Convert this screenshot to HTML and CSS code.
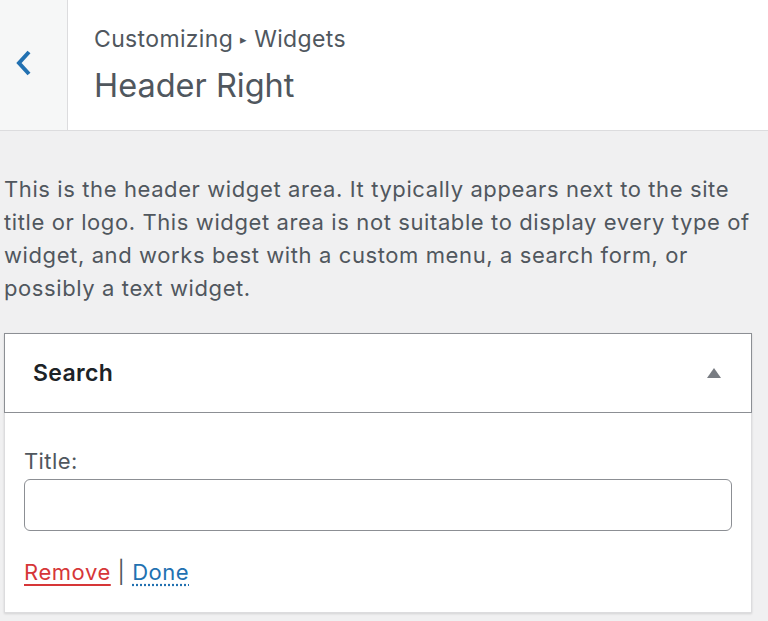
FILE: index.html
```html
<!DOCTYPE html>
<html lang="en">
<head>
<meta charset="utf-8">
<title>Header Right</title>
<link rel="stylesheet" href="styles.css">
</head>
<body>
<div class="panel">
  <header class="section-header">
    <button class="back" aria-label="Back">
      <svg width="16" height="26" viewBox="0 0 16 26"><path d="M13 2 L3 13 L13 24" fill="none" stroke="#2271b1" stroke-width="4" stroke-linecap="butt" stroke-linejoin="miter"/></svg>
    </button>
    <div class="titles">
      <div class="crumb">Customizing <span class="sep">▸</span> Widgets</div>
      <h3 class="title">Header Right</h3>
    </div>
  </header>
  <div class="content">
    <p class="description">This is the header widget area. It typically appears next to the site title or logo. This widget area is not suitable to display every type of widget, and works best with a custom menu, a search form, or possibly a text widget.</p>
    <div class="widget">
      <div class="widget-top">
        <span class="widget-title">Search</span>
        <span class="toggle"></span>
      </div>
      <div class="widget-inside">
        <label class="field-label" for="t">Title:</label>
        <input id="t" class="field" type="text">
        <div class="actions"><a href="#" class="remove">Remove</a> <span class="pipe">|</span> <a href="#" class="done">Done</a></div>
      </div>
    </div>
  </div>
</div>
</body>
</html>
```

FILE: styles.css
```css
html, body {
  margin: 0;
  padding: 0;
  background: #f0f0f1;
  font-family: Inter, "Noto Sans", sans-serif;
  color: #50575e;
}
.panel {
  width: 768px;
  height: 621px;
  overflow: hidden;
}
.section-header {
  display: flex;
  height: 130px;
  background: #fff;
  border-bottom: 1px solid #dcdcde;
}
.back {
  width: 68px;
  flex: none;
  background: #f6f7f7;
  border: none;
  border-right: 1px solid #dcdcde;
  display: flex;
  align-items: center;
  justify-content: flex-start;
  padding: 0 0 5px 16px;
  box-sizing: border-box;
}
.back svg { display: block; }
.titles {
  padding: 25px 0 0 26px;
}
.crumb {
  font-size: 23px;
  line-height: 28px;
  letter-spacing: 0.35px;
  color: #50575e;
}
.sep {
  font-size: 13px;
  position: relative;
  top: -3px;
}
.title {
  margin: 10px 0 0;
  font-size: 32.5px;
  line-height: 40px;
  font-weight: 400;
  color: #50575e;
}
.content {
  padding: 42px 16px 0 4px;
}
.description {
  margin: 0 -12px 0 0;
  font-size: 22px;
  line-height: 33px;
  letter-spacing: 0.6px;
  color: #50575e;
}
.widget {
  margin-top: 28px;
  background: #fff;
  border: 1px solid #dcdcde;
  border-top: none;
  box-shadow: 0 1px 2px rgba(0,0,0,0.12);
}
.widget-top {
  display: flex;
  align-items: center;
  justify-content: space-between;
  height: 78px;
  border: 1px solid #8c8f94;
  margin: 0 -1px;
  padding: 0 30px 0 28px;
}
.widget-title {
  font-size: 23px;
  font-weight: 600;
  letter-spacing: 0.35px;
  color: #1d2327;
}
.toggle {
  width: 0;
  height: 0;
  border-left: 7px solid transparent;
  border-right: 7px solid transparent;
  border-bottom: 10px solid #787c82;
}
.widget-inside {
  padding: 34px 19px 26px 19px;
}
.field-label {
  display: block;
  font-size: 22px;
  line-height: 28px;
  letter-spacing: 0.4px;
  color: #50575e;
}
.field {
  display: block;
  box-sizing: border-box;
  width: 100%;
  height: 52px;
  margin-top: 4px;
  border: 1.5px solid #8c8f94;
  border-radius: 6px;
  background: #fff;
}
.actions {
  margin-top: 27px;
  font-size: 22px;
  line-height: 28px;
  letter-spacing: 0.55px;
  color: #50575e;
}
.remove {
  color: #d63638;
  text-decoration: underline;
  text-underline-offset: 4px;
}
.done {
  color: #2271b1;
  text-decoration: underline;
  text-decoration-style: dotted;
  text-underline-offset: 4px;
}
```
